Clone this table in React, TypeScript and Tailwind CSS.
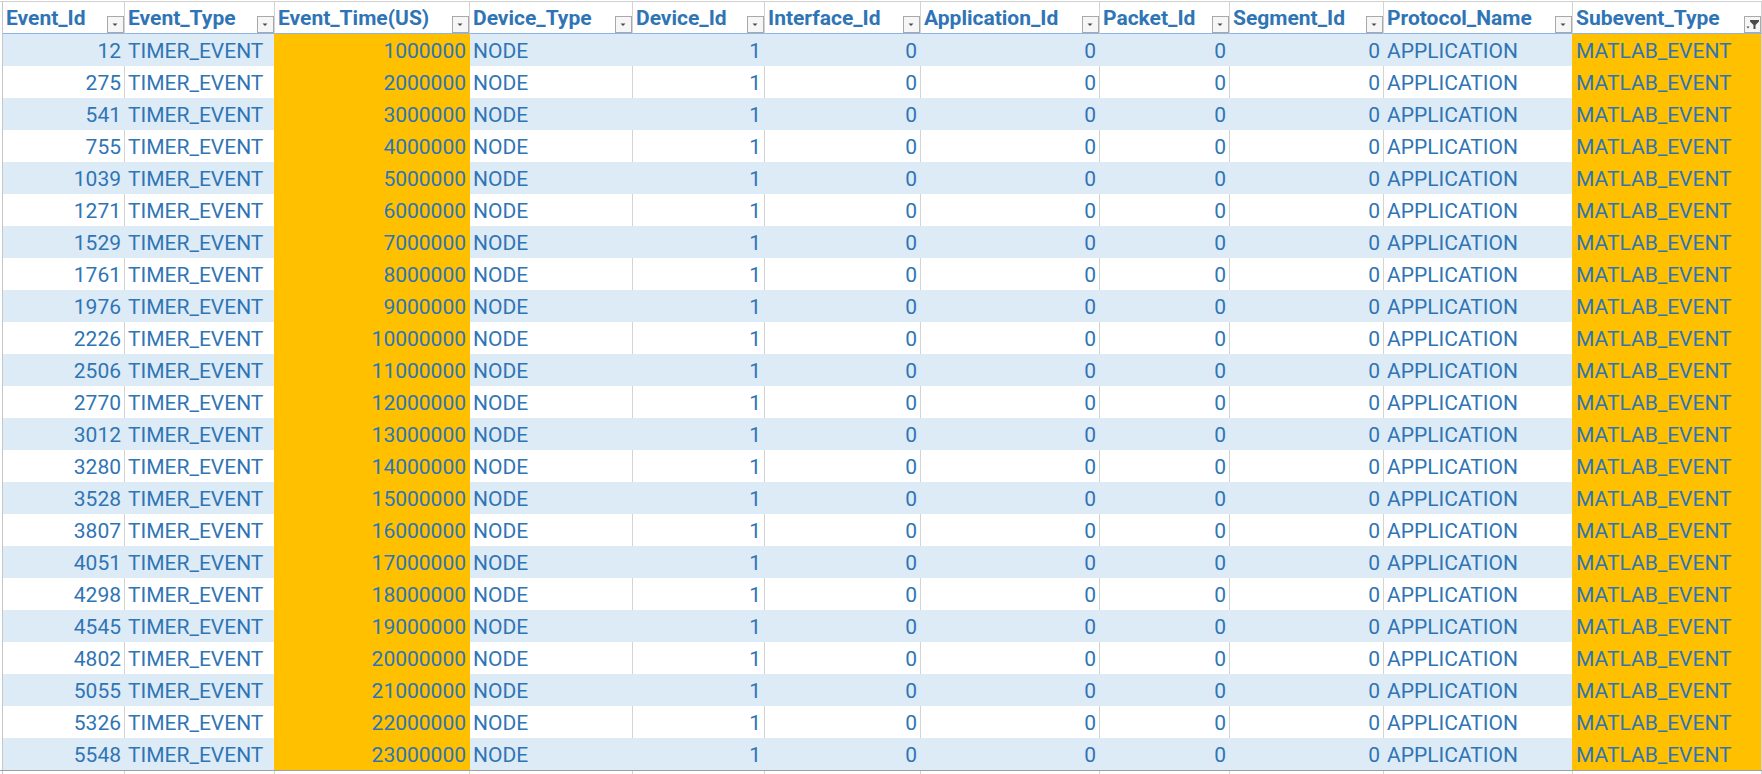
import React from 'react';

type Col = { name: string; w: number; right: boolean };

const cols: Col[] = [
  { name: 'Event_Id', w: 122, right: true },
  { name: 'Event_Type', w: 150, right: false },
  { name: 'Event_Time(US)', w: 195, right: true },
  { name: 'Device_Type', w: 163, right: false },
  { name: 'Device_Id', w: 132, right: true },
  { name: 'Interface_Id', w: 156, right: true },
  { name: 'Application_Id', w: 179, right: true },
  { name: 'Packet_Id', w: 130, right: true },
  { name: 'Segment_Id', w: 154, right: true },
  { name: 'Protocol_Name', w: 189, right: false },
  { name: 'Subevent_Type', w: 189, right: false },
];

const ids = [12, 275, 541, 755, 1039, 1271, 1529, 1761, 1976, 2226, 2506, 2770, 3012, 3280, 3528, 3807, 4051, 4298, 4545, 4802, 5055, 5326, 5548];

const rows = ids.map((id, i) => [
  String(id),
  'TIMER_EVENT',
  String((i + 1) * 1000000),
  'NODE',
  '1',
  '0',
  '0',
  '0',
  '0',
  'APPLICATION',
  'MATLAB_EVENT',
]);

// Event_Time and Subevent_Type are highlighted
const orange = [2, 10];

const FilterButton: React.FC<{ active?: boolean }> = ({ active }) => (
  <div className="w-[17px] h-[17px] shrink-0 border border-[#a9a9a9] bg-[#f6f6f6] self-end">
    <svg width="15" height="15" viewBox="0 0 15 15">
      {active ? (
        <>
          <polygon points="5,3 14,3 14,4.5 10.5,8 10.5,12 8.5,12 8.5,8 5,4.5" fill="#4a4a4a" />
          <polygon points="1.5,9.5 4.5,9.5 3,11.5" fill="#4a4a4a" />
        </>
      ) : (
        <polygon points="4.5,6.5 9.5,6.5 7,9" fill="#4a4a4a" />
      )}
    </svg>
  </div>
);

function borderFor(i: number, banded: boolean) {
  if (i === cols.length - 1) return 'border-[#d4d4d4]';
  if (orange.includes(i) || orange.includes(i + 1)) return 'border-[#ffc000]';
  return banded ? 'border-[#ddebf7]' : 'border-[#d4d4d4]';
}

export default function App() {
  return (
    <div className="w-[1762px] h-[774px] overflow-hidden bg-white font-['Roboto','Liberation_Sans',sans-serif] text-[#2f75b5]">
      <div className="h-[1px] bg-white" />
      <div className="h-[1px] bg-[#d0d0d0]" />
      {/* header */}
      <div className="flex h-[32px]">
        <div className="w-[3px] shrink-0 border-r border-[#c6c6c6]" />
        {cols.map((c, i) => (
          <div
            key={c.name}
            style={{ width: c.w }}
            className="shrink-0 flex border-r border-b border-b-[#8eb4e3] border-r-[#d4d4d4] bg-white"
          >
            <span className="flex-1 pl-[3px] pt-[2px] leading-[28px] text-[21px] font-bold whitespace-nowrap overflow-hidden">
              {c.name}
            </span>
            <FilterButton active={i === cols.length - 1} />
          </div>
        ))}
      </div>
      {/* body */}
      {rows.map((r, ri) => {
        const banded = ri % 2 === 0;
        return (
          <div key={ri} className="flex h-[32px]">
            <div className="w-[3px] shrink-0 border-r border-[#c6c6c6]" />
            {r.map((v, ci) => {
              const bg = orange.includes(ci) ? 'bg-[#ffc000]' : banded ? 'bg-[#ddebf7]' : 'bg-white';
              return (
                <div
                  key={ci}
                  style={{ width: cols[ci].w }}
                  className={`shrink-0 border-r ${borderFor(ci, banded)} ${bg} px-[3px] pt-[3px] leading-[28px] text-[21px] whitespace-nowrap overflow-hidden ${cols[ci].right ? 'text-right' : 'text-left'}`}
                >
                  {v}
                </div>
              );
            })}
          </div>
        );
      })}
      <div className="h-[1px] bg-[#a0a0a0]" />
      <div className="flex h-[3px]">
        <div className="w-[3px] shrink-0 border-r border-[#c6c6c6]" />
        {cols.map((c) => (
          <div key={c.name} style={{ width: c.w }} className="shrink-0 border-r border-[#d4d4d4]" />
        ))}
      </div>
    </div>
  );
}
